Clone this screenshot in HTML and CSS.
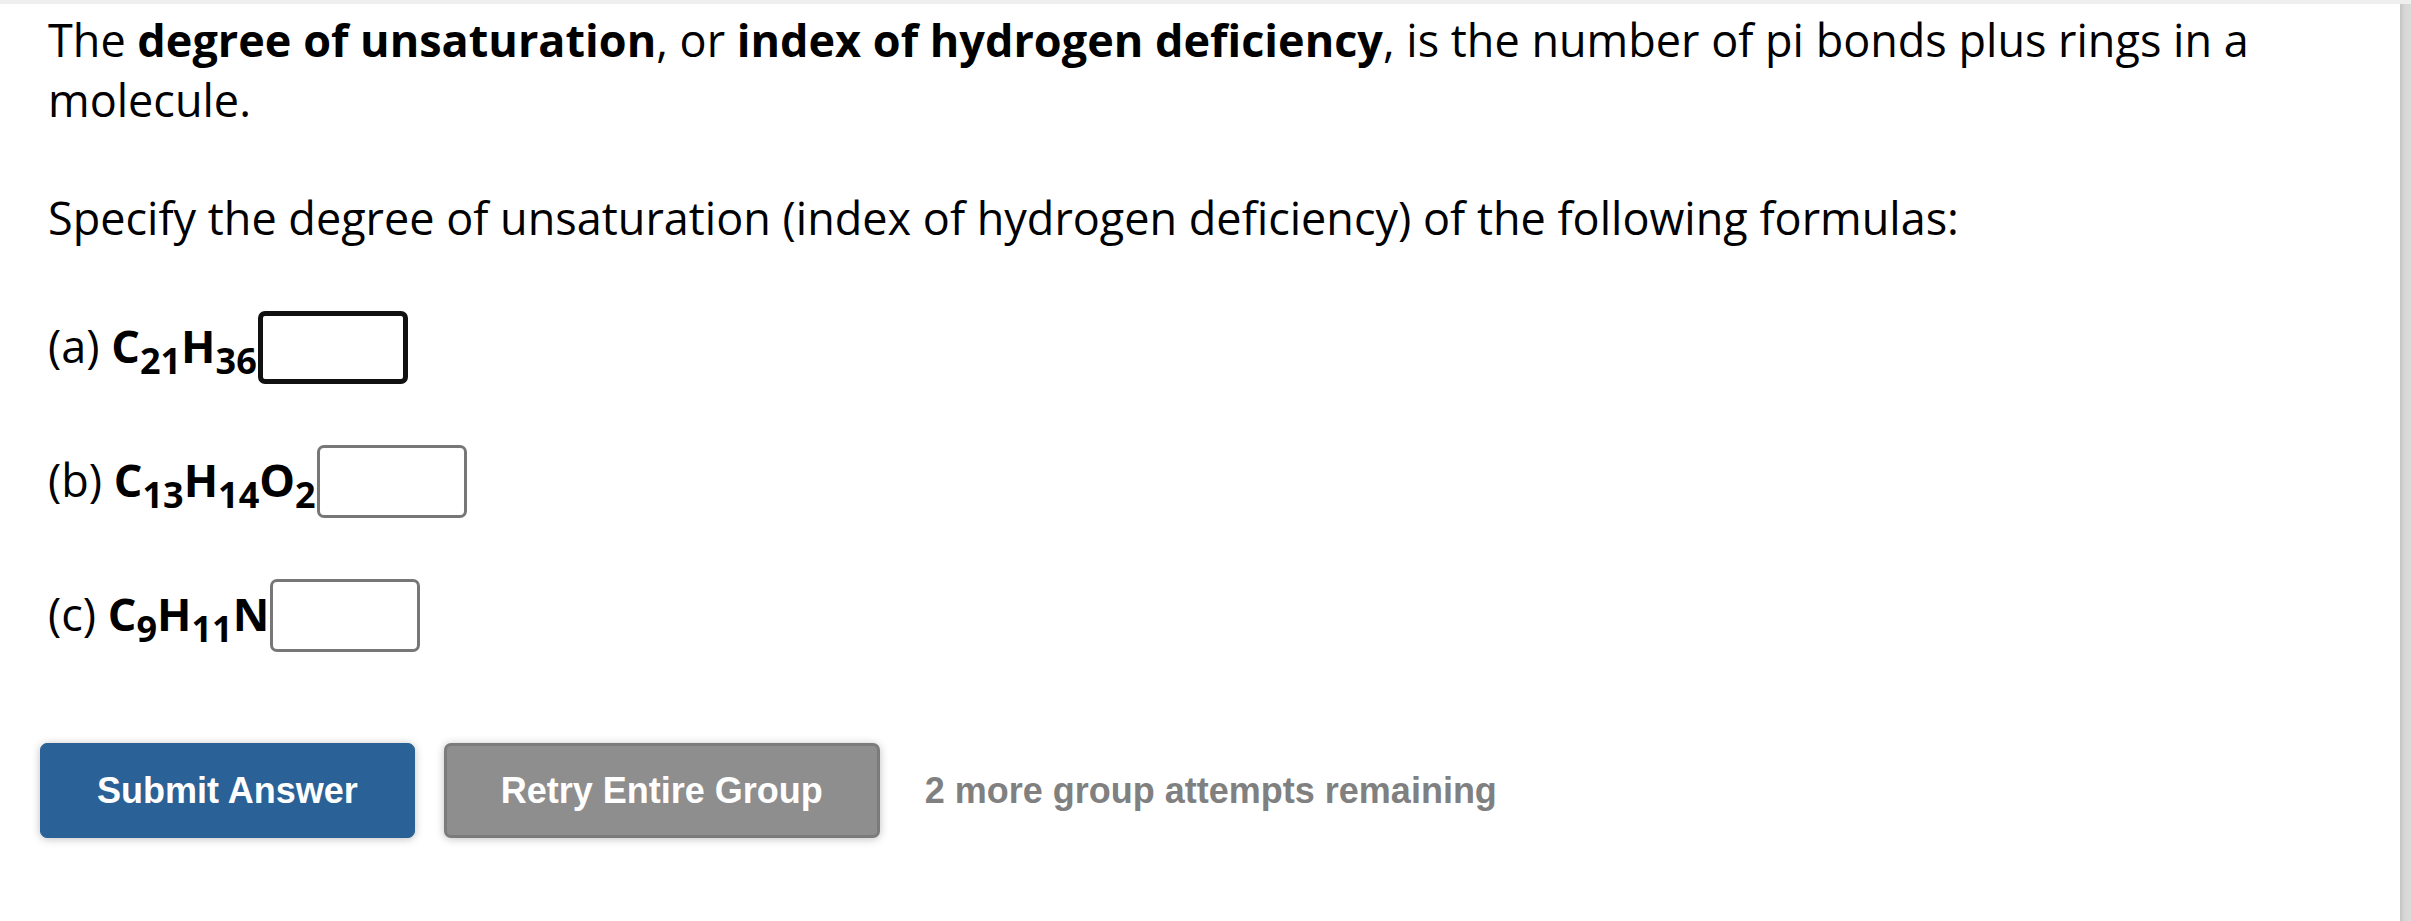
FILE: index.html
```html
<!DOCTYPE html>
<html lang="en">
<head>
<meta charset="utf-8">
<title>Degree of unsaturation</title>
<link rel="stylesheet" href="styles.css">
</head>
<body>
<div class="topbar"></div>
<div class="frame">
  <main class="content">
    <p class="para">The <b>degree of unsaturation</b>, or <b>index of hydrogen deficiency</b>, is the number of pi bonds plus rings in a molecule.</p>
    <p class="para para-second">Specify the degree of unsaturation (index of hydrogen deficiency) of the following formulas:</p>
    <div class="rows">
      <div class="row"><span class="label">(a) <span class="formula">C<sub>21</sub>H<sub>36</sub></span></span><span class="answer answer-focus"></span></div>
      <div class="row"><span class="label">(b) <span class="formula">C<sub>13</sub>H<sub>14</sub>O<sub>2</sub></span></span><span class="answer"></span></div>
      <div class="row"><span class="label">(c) <span class="formula">C<sub>9</sub>H<sub>11</sub>N</span></span><span class="answer"></span></div>
    </div>
    <div class="actions">
      <button class="btn btn-submit" type="button">Submit Answer</button>
      <button class="btn btn-retry" type="button">Retry Entire Group</button>
      <span class="remaining">2 more group attempts remaining</span>
    </div>
  </main>
  <div class="edge"></div>
</div>
</body>
</html>
```
FILE: styles.css
```css
html, body {
  margin: 0;
  padding: 0;
  background: #ffffff;
  height: 100%;
  overflow: hidden;
}

body {
  font-family: "Open Sans", "Noto Sans", sans-serif;
  color: #000;
}

.topbar {
  height: 4px;
  background: #efefef;
}

.frame {
  display: flex;
  height: 917px;
}

.content {
  flex: 1;
  padding: 6px 0 0 40px;
}

.edge {
  width: 11px;
  background: linear-gradient(to right, #c4c4c4, #d6d6d6 40%, #dcdcdc);
}

.para {
  margin: 0;
  padding-left: 8px;
  font-size: 45px;
  line-height: 60px;
  max-width: 2300px;
}

.para-second {
  margin-top: 58px;
}

.rows {
  margin-top: 63px;
  padding-left: 8px;
  display: flex;
  flex-direction: column;
  gap: 61px;
}

.row {
  display: flex;
  align-items: center;
  height: 73px;
  font-size: 45px;
  line-height: 60px;
}

.label {
  position: relative;
  top: -2px;
}

.formula {
  font-weight: 700;
}

.formula sub {
  font-size: 36px;
  line-height: 0;
  position: relative;
  vertical-align: baseline;
  top: 11px;
}

.answer {
  display: block;
  box-sizing: border-box;
  width: 150px;
  height: 73px;
  margin-left: 1px;
  border: 3px solid #777777;
  border-radius: 7px;
  background: #fff;
}

.answer-focus {
  border: 5px solid #111111;
}

.actions {
  margin-top: 91px;
  display: flex;
  align-items: center;
}

.btn {
  margin: 0;
  font-family: "Liberation Sans", Arial, sans-serif;
  font-weight: 700;
  font-size: 36px;
  line-height: 41px;
  color: #fff;
  height: 95px;
  padding: 0 56px;
  border-radius: 7px;
  box-shadow: 0 1px 8px rgba(0, 0, 0, 0.25);
  cursor: pointer;
}

.btn-submit {
  background: #2a6298;
  border: 1px solid #2a6298;
}

.btn-retry {
  margin-left: 29px;
  padding: 0 54px;
  background: #8e8e8e;
  border: 3px solid #7b7b7b;
}

.remaining {
  margin-left: 45px;
  font-family: "Liberation Sans", Arial, sans-serif;
  font-weight: 700;
  font-size: 36px;
  color: #808080;
}
```
